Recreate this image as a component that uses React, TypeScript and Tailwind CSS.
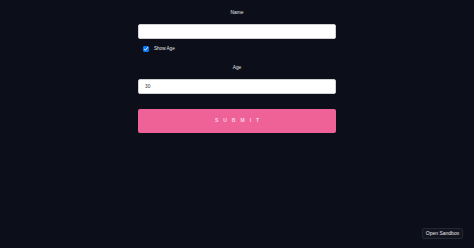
import React from "react";

export default function App() {
  return (
    <div className="relative w-[474px] h-[248px] bg-[#0c0f1a] overflow-hidden" style={{ fontFamily: "'Liberation Sans', Arial, sans-serif" }}>
      <form className="w-[198px] ml-[138px] flex flex-col" onSubmit={(e) => e.preventDefault()}>
        <label className="mt-[9px] h-[8px] leading-[8px] text-[4.8px] text-[#e6e6e6] text-center">Name</label>
        <input className="mt-[7px] h-[15px] w-full bg-white rounded-[2px] border border-[#d0d0d0] outline-none px-[5px] text-[4.8px] text-[#333]" />
        <div className="mt-[5px] h-[9px] flex items-center pl-[5px] gap-[5px]">
          <input type="checkbox" defaultChecked className="w-[6px] h-[6px] m-0" />
          <span className="text-[4.6px] text-[#e6e6e6] leading-[9px]">Show Age</span>
        </div>
        <label className="mt-[11px] h-[8px] leading-[8px] text-[4.8px] text-[#e6e6e6] text-center">Age</label>
        <input defaultValue="30" className="mt-[7px] h-[15px] w-full bg-white rounded-[2px] border border-[#d0d0d0] outline-none px-[6px] text-[4.8px] text-[#333]" />
        <button type="submit" className="mt-[15px] h-[24px] w-full bg-[#ef6298] rounded-[2px] text-[5px] font-bold tracking-[5px] text-[#f9d3e3] pl-[5px]">SUBMIT</button>
      </form>
      <button className="absolute right-[11px] bottom-[9px] w-[41px] h-[11px] bg-[#12151f] border border-[#242833] rounded-[2px] text-[5px] text-[#e8e8e8] leading-[9px]">Open Sandbox</button>
    </div>
  );
}
